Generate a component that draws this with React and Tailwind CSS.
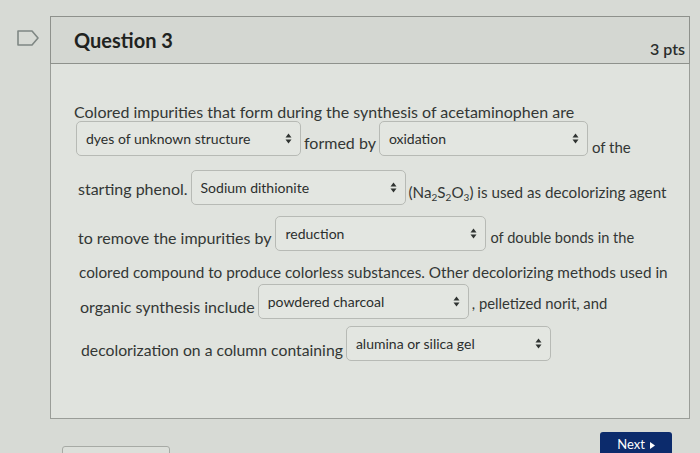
import React from 'react';

const font = { fontFamily: 'Lato, "Open Sans", sans-serif' };

const Arrows = () => (
  <svg width="7" height="11" viewBox="0 0 7 11" className="shrink-0">
    <path d="M3.5 0.5 L6.5 4.5 L0.5 4.5 Z" fill="#2f3331" />
    <path d="M3.5 10.5 L6.5 6.5 L0.5 6.5 Z" fill="#2f3331" />
  </svg>
);

const Select = ({ value, w = 'w-[210px]' }) => (
  <div className={`flex h-[35px] ${w} shrink-0 items-center justify-between rounded-[5px] border border-[#b7bab5] bg-[#e3e6e1] pl-[9px] pr-[8px]`}>
    <span className="text-[14px] text-[#2b2e2d]">{value}</span>
    <Arrows />
  </div>
);

const T = ({ children, className = 'pt-[12px] text-[16px]' }) => (
  <span className={`whitespace-nowrap leading-5 text-[#333735] ${className}`}>{children}</span>
);

export default function App() {
  return (
    <div className="relative h-[453px] w-[700px] overflow-hidden bg-[#d7dad5]" style={font}>
      <div className="flex pt-[16px]">
        {/* flag icon */}
        <div className="w-[50px] pl-[17px] pt-[14px]">
          <svg width="23" height="16" viewBox="0 0 23 16">
            <path d="M1 1 H15 L21 8 L15 15 H1 Z" fill="none" stroke="#7f8784" strokeWidth="1.6" strokeLinejoin="round" />
          </svg>
        </div>

        <div className="w-[640px]">
          <div className="flex h-[48px] items-center justify-between border border-[#8e918c] bg-[#d4d7d2] pl-[23px] pr-[4px]">
            <h2 className="text-[20px] font-bold text-[#1f2321]">Question 3</h2>
            <span className="self-end pb-[2px] text-[16px] font-semibold text-[#2a2d2c]">3 pts</span>
          </div>

          <div className="h-[355px] border-x border-b border-[#9a9d98] bg-[#e0e3de] pl-[23px] pt-[38px]">
            <div className="flex h-[20px] items-center">
              <span className="whitespace-nowrap text-[16px] leading-5 text-[#333735]">
                Colored impurities that form during the synthesis of acetaminophen are
              </span>
            </div>

            <div className="-mt-[1px] flex items-start gap-[3px] pl-[2px]">
              <Select value="dyes of unknown structure" w="w-[225px]" />
              <T>formed by</T>
              <Select value="oxidation" w="w-[209px]" />
              <T className="pl-[1px] pt-[16px] text-[15px]">of the</T>
            </div>

            <div className="mt-[13px] flex items-start gap-[3px] pl-[4px]">
              <T className="pt-[9px] text-[16px]">starting phenol.</T>
              <Select value="Sodium dithionite" w="w-[215px]" />
              <T className="pt-[12px] text-[15.2px]">
                (Na<sub className="text-[10px]">2</sub>S<sub className="text-[10px]">2</sub>O<sub className="text-[10px]">3</sub>) is used as decolorizing agent
              </T>
            </div>

            <div className="mt-[11px] flex items-start gap-[4px] pl-[4px]">
              <T>to remove the impurities by</T>
              <Select value="reduction" w="w-[211px]" />
              <T className="pt-[12px] text-[14.6px]">of double bonds in the</T>
            </div>

            <div className="mt-[11px] flex h-[20px] items-center pl-[5px]">
              <span className="whitespace-nowrap text-[15.3px] leading-5 text-[#333735]">
                colored compound to produce colorless substances. Other decolorizing methods used in
              </span>
            </div>

            <div className="mt-[2px] flex items-start gap-[3px] pl-[6px]">
              <T className="pt-[13px] text-[16px]">organic synthesis include</T>
              <Select value="powdered charcoal" w="w-[211px]" />
              <T className="pt-[9px] text-[14.8px]">, pelletized norit, and</T>
            </div>

            <div className="mt-[7px] flex items-start gap-[3px] pl-[7px]">
              <T className="pt-[14px] text-[15.75px]">decolorization on a column containing</T>
              <Select value="alumina or silica gel" w="w-[205px]" />
            </div>
          </div>

          <div className="mt-[13px] flex items-start justify-between pl-[12px] pr-[18px]">
            <div className="mt-[14px] h-[20px] w-[108px] rounded-[3px] border border-[#a7aaa5] bg-[#dcdfda]" />
            <button className="flex h-[26px] w-[72px] items-center justify-center gap-[5px] rounded-[3px] bg-[#0c2b6c] text-[13px] text-white">
              Next
              <svg width="5" height="7" viewBox="0 0 5 7"><path d="M0 0 L5 3.5 L0 7 Z" fill="#fff" /></svg>
            </button>
          </div>
        </div>
      </div>
    </div>
  );
}
